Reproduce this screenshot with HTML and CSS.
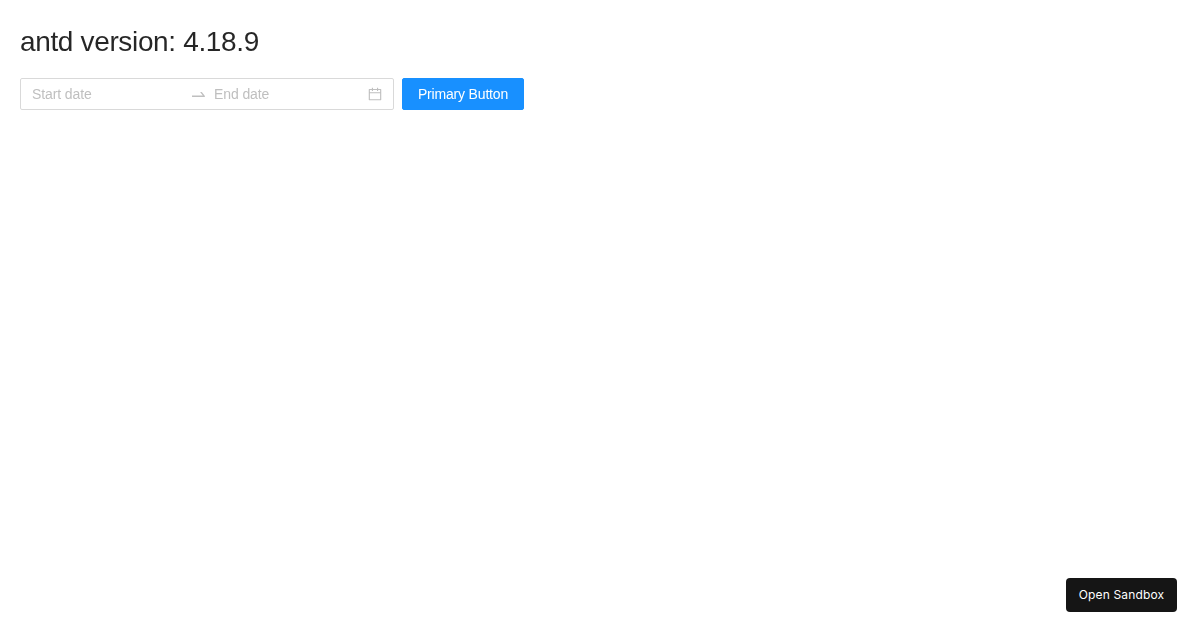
FILE: index.html
```html
<!DOCTYPE html>
<html lang="en">
<head>
<meta charset="utf-8">
<title>antd version</title>
<link rel="stylesheet" href="styles.css">
</head>
<body>
<div class="app">
  <h1 class="title">antd version: 4.18.9</h1>
  <div class="controls">
    <div class="range-picker">
      <div class="range-input"><span class="placeholder">Start date</span></div>
      <span class="separator">
        <svg viewBox="144 376 736 272" width="13" height="5" fill="currentColor" aria-hidden="true"><path d="M873.1 596.2l-164-208A32 32 0 00684 376h-64.8c-6.7 0-10.4 7.7-6.3 13l144.3 183H152c-4.4 0-8 3.6-8 8v60c0 4.4 3.6 8 8 8h695.9c26.8 0 41.7-30.8 25.2-51.8z"/></svg>
      </span>
      <div class="range-input"><span class="placeholder">End date</span></div>
      <span class="suffix">
        <svg viewBox="64 64 896 896" width="14" height="14" fill="currentColor" aria-hidden="true"><path d="M880 184H712v-64c0-4.4-3.6-8-8-8h-56c-4.4 0-8 3.6-8 8v64H384v-64c0-4.4-3.6-8-8-8h-56c-4.4 0-8 3.6-8 8v64H144c-17.7 0-32 14.3-32 32v664c0 17.7 14.3 32 32 32h736c17.7 0 32-14.3 32-32V216c0-17.7-14.3-32-32-32zm-40 656H184V460h656v380zM184 392V256h128v48c0 4.4 3.6 8 8 8h56c4.4 0 8-3.6 8-8v-48h256v48c0 4.4 3.6 8 8 8h56c4.4 0 8-3.6 8-8v-48h128v136H184z"/></svg>
      </span>
    </div>
    <button class="primary-btn" type="button">Primary Button</button>
  </div>
</div>
<a class="sandbox-btn">Open Sandbox</a>
</body>
</html>
```
FILE: styles.css
```css
* { box-sizing: border-box; }
html, body { margin: 0; height: 100%; background: #fff; }
body {
  font-family: "Liberation Sans", Arial, sans-serif;
  font-size: 14px;
  line-height: 1.5715;
  color: rgba(0, 0, 0, 0.85);
}
.app { padding: 21px 20px 20px; will-change: transform; }
.title {
  margin: 0 0 15px;
  font-size: 28px;
  font-weight: 400;
  line-height: 42px;
  letter-spacing: -0.35px;
}
.controls { display: flex; align-items: flex-start; gap: 8px; }
.range-picker {
  display: flex;
  align-items: center;
  width: 374px;
  height: 32px;
  padding: 4px 11px;
  border: 1px solid #d9d9d9;
  border-radius: 2px;
}
.range-input { flex: 1; min-width: 0; letter-spacing: -0.1px; }
.placeholder { color: #bfbfbf; }
.separator {
  display: flex;
  width: 32px;
  color: #bfbfbf;
  justify-content: center;
}
.separator svg { flex: none; }
.suffix { display: flex; margin-left: 4px; color: #bfbfbf; }
.primary-btn {
  width: 122px;
  height: 32px;
  padding: 4px 0;
  border: 1px solid #1890ff;
  border-radius: 2px;
  background: #1890ff;
  color: #fff;
  font: inherit;
  letter-spacing: -0.18px;
}
.sandbox-btn {
  position: fixed;
  right: 23px;
  bottom: 18px;
  width: 111px;
  height: 34px;
  border-radius: 4px;
  background: #151515;
  color: #fff;
  font-family: Inter, sans-serif;
  font-size: 12px;
  letter-spacing: 0.15px;
  line-height: 34px;
  text-align: center;
}
```
